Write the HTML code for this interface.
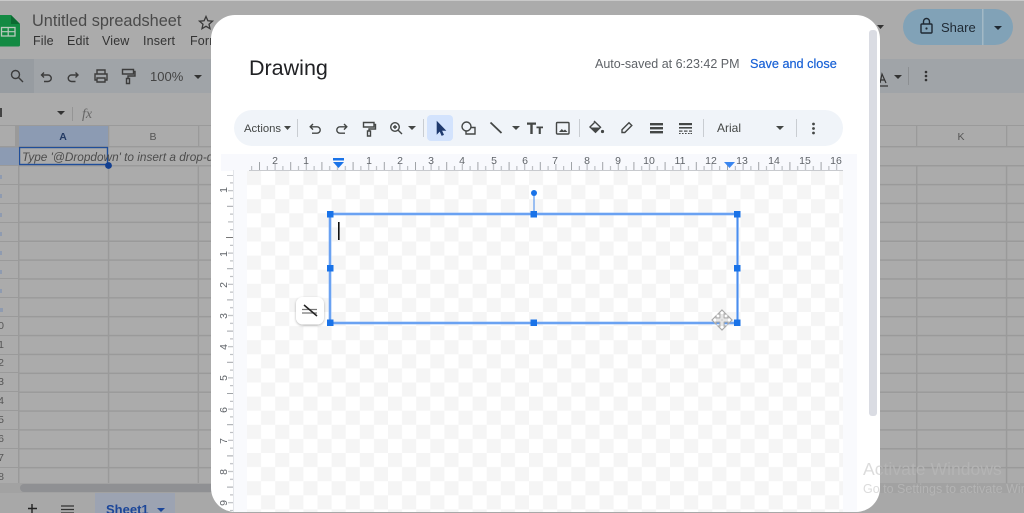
<!DOCTYPE html>
<html><head><meta charset="utf-8"><style>
html,body{margin:0;padding:0}
body{width:1024px;height:513px;overflow:hidden;position:relative;background:#ababab;font-family:"Liberation Sans",sans-serif}
svg{position:absolute;left:0;top:0;filter:blur(.35px)}
</style></head><body>
<svg width="1024" height="513" viewBox="0 0 1024 513" font-family="Liberation Sans, sans-serif">
<defs>
<pattern id="grid" x="18" y="165" width="89.8" height="18.87" patternUnits="userSpaceOnUse">
<rect x="0" y="0" width="1.5" height="19" fill="#9a9a9a"/><rect x="0" y="0" width="90" height="1.5" fill="#9a9a9a"/>
</pattern>
<pattern id="chk" x="247" y="171" width="28.2" height="28.2" patternUnits="userSpaceOnUse">
<rect x="0" y="0" width="14.1" height="14.1" fill="#f5f5f5"/><rect x="14.1" y="14.1" width="14.1" height="14.1" fill="#f5f5f5"/>
</pattern>
<pattern id="ht" x="259" y="155" width="31.2" height="16" patternUnits="userSpaceOnUse">
<rect x="0" y="7" width="1" height="8" fill="#a0a3a8"/><rect x="7.8" y="11" width="1" height="4" fill="#b0b3b8"/><rect x="15.6" y="9" width="1" height="6" fill="#b0b3b8"/><rect x="23.4" y="11" width="1" height="4" fill="#b0b3b8"/>
</pattern>
<pattern id="vt" x="224" y="174.6" width="9" height="31.2" patternUnits="userSpaceOnUse">
<rect x="3" y="0" width="6" height="1" fill="#a0a3a8"/><rect x="6" y="7.8" width="3" height="1" fill="#b0b3b8"/><rect x="4" y="15.6" width="5" height="1" fill="#b0b3b8"/><rect x="6" y="23.4" width="3" height="1" fill="#b0b3b8"/>
</pattern>
<clipPath id="onWhite"><path d="M840 440H880V488a24 24 0 0 1-24 24H840z"/></clipPath>
<clipPath id="onGray"><path d="M880 440H1024V513H840V512H856a24 24 0 0 0 24-24z"/></clipPath>
<filter id="sh" x="-30%" y="-30%" width="160%" height="160%"><feDropShadow dx="0" dy="1" stdDeviation="1.3" flood-color="#000" flood-opacity=".3"/></filter>
</defs>

<!-- sheets background -->
<rect width="1024" height="1" fill="#c9c9c9"/>
<rect x="0" y="59" width="1024" height="34" fill="#a0a4a8"/>
<rect x="0" y="59" width="34" height="34" fill="#979ca1"/>
<rect x="0" y="125" width="1024" height="358" fill="#ababab"/>
<rect x="18" y="125" width="90" height="21" fill="#8c9bb3"/>
<rect x="0" y="147" width="18" height="18" fill="#8c9bb3"/>
<rect x="18" y="165" width="1006" height="318" fill="url(#grid)"/>
<g fill="#9a9a9a"><rect x="0" y="125" width="1024" height="1"/><rect x="0" y="146" width="1024" height="1.4"/>
<rect x="18" y="125" width="1" height="22"/><rect x="108" y="125" width="1.3" height="22"/><rect x="198" y="125" width="1.3" height="22"/><rect x="916" y="125" width="1.3" height="22"/><rect x="1006" y="125" width="1.3" height="22"/><rect x="15" y="125" width="3" height="22"/>
<rect x="0" y="165" width="18" height="1"/><rect x="0" y="184" width="18" height="1"/><rect x="0" y="203" width="18" height="1"/><rect x="0" y="222" width="18" height="1"/><rect x="0" y="241" width="18" height="1"/><rect x="0" y="260" width="18" height="1"/><rect x="0" y="278" width="18" height="1"/><rect x="0" y="297" width="18" height="1"/><rect x="0" y="316" width="18" height="1"/><rect x="0" y="335" width="18" height="1"/><rect x="0" y="354" width="18" height="1"/><rect x="0" y="372" width="18" height="1"/><rect x="0" y="391" width="18" height="1"/><rect x="0" y="410" width="18" height="1"/><rect x="0" y="429" width="18" height="1"/><rect x="0" y="448" width="18" height="1"/><rect x="0" y="467" width="18" height="1"/>
</g>
<rect x="19.5" y="147.5" width="88" height="17" fill="none" stroke="#1f4e9a" stroke-width="1.4"/>
<circle cx="108.5" cy="165.5" r="3.4" fill="#123f90"/>
<text x="22" y="161" font-size="11.8" font-style="italic" fill="#4c4c4c">Type '@Dropdown' to insert a drop-down</text>
<text x="63" y="140" font-size="10.5" font-weight="bold" fill="#233a63" text-anchor="middle">A</text>
<text x="153" y="140" font-size="10.5" fill="#555" text-anchor="middle">B</text>
<text x="961" y="140" font-size="10.5" fill="#555" text-anchor="middle">K</text>
<g font-size="10.5" fill="#555" text-anchor="end">
<text x="4" y="329">0</text><text x="4" y="348">1</text><text x="4" y="366">2</text><text x="4" y="385">3</text><text x="4" y="404">4</text><text x="4" y="423">5</text><text x="4" y="442">6</text><text x="4" y="461">7</text><text x="4" y="480">8</text>
</g>
<g fill="#8f9bb0"><rect x="0" y="175" width="2" height="4"/><rect x="0" y="194" width="2" height="4"/><rect x="0" y="213" width="2" height="4"/><rect x="0" y="232" width="2" height="4"/><rect x="0" y="251" width="2" height="4"/><rect x="0" y="270" width="2" height="4"/><rect x="0" y="289" width="2" height="4"/><rect x="0" y="308" width="3" height="4"/></g>

<!-- bottom bar -->
<rect x="0" y="483" width="1024" height="30" fill="#a8a8a8"/>
<rect x="0" y="483" width="1024" height="10" fill="#a2a2a2"/>
<rect x="20" y="484" width="200" height="8" rx="4" fill="#8f9093"/>
<rect x="95" y="493" width="80" height="20" fill="#9ca3b2"/>
<text x="106" y="514" font-size="13" font-weight="bold" fill="#1c4699">Sheet1</text>
<path d="M157 508h8l-4 4z" fill="#1c4699"/>
<path d="M32 504v9M28 508.5h9" stroke="#222" stroke-width="1.4"/>
<path d="M61 506h13M61 509.5h13M61 513h13" stroke="#333" stroke-width="1.3"/>

<!-- sheets header -->
<path d="M-4 15h15l9 9v21a1.5 1.5 0 0 1-1.5 1.5H-4z" fill="#138a43"/>
<path d="M11 15l9 9h-9z" fill="#0c6b32"/>
<rect x="1.5" y="27.5" width="13.5" height="8.5" fill="none" stroke="#b9c9bd" stroke-width="1.3"/><path d="M8.2 27.5v8.5M1.5 31.7h13.5" stroke="#b9c9bd" stroke-width="1.2"/>
<text x="32" y="26" font-size="16.3" fill="#4a4a4a">Untitled spreadsheet</text>
<path d="M206 16.5l1.9 4.3 4.6.4-3.500 3 1 4.500-4-2.400-4 2.400 1-4.500-3.500-3 4.600-.4z" fill="none" stroke="#3a3a3a" stroke-width="1.3"/>
<g font-size="12.5" fill="#333" letter-spacing=".15"><text x="33" y="45">File</text><text x="67" y="45">Edit</text><text x="102" y="45">View</text><text x="143" y="45">Insert</text><text x="190" y="45">Format</text></g>
<g fill="none" stroke="#3c3c3c" stroke-width="1.4">
<circle cx="15.5" cy="74.5" r="4"/><path d="M18.5 77.5l4.500 4.500"/>
<path d="M44 72.500l-2.500 2.500 2.500 2.500M41.500 75h6.500a3 3 0 0 1 0 6.500h-4"/>
<path d="M75.500 72.500l2.500 2.500-2.500 2.500M78 75h-6.500a3 3 0 0 0 0 6.500h4"/>
<path d="M97 74v-4h8v4M97 80h-2v-6h12v6h-2M97 78h8v4h-8z"/>
<path d="M122.500 69.500h11v4.500h-11zM133.500 71.500h1.500v4.500h-7v2"/><path d="M126.500 78.500h3v5h-3z"/>
</g>
<text x="150" y="81" font-size="13" fill="#444">100%</text>
<path d="M194 75h8l-4 4z" fill="#333"/>
<path d="M877 25h7l-3.500 4z" fill="#333"/>
<path d="M880 83l2-9 4 9m-5-3h4M880 86h8" fill="none" stroke="#333" stroke-width="1.2"/>
<path d="M894 75h8l-4 4z" fill="#333"/><rect x="908" y="67" width="1" height="18" fill="#8c8f92"/>
<g fill="#333"><circle cx="926" cy="72" r="1.3"/><circle cx="926" cy="76" r="1.3"/><circle cx="926" cy="80" r="1.3"/></g>
<path d="M57 111h8l-4 4z" fill="#333"/><rect x="72" y="107" width="1" height="14" fill="#959595"/>
<text x="82" y="118" font-size="14" font-style="italic" font-family="Liberation Serif, serif" fill="#666">fx</text>
<rect x="0" y="108" width="2" height="9" fill="#444"/>

<!-- Share -->
<rect x="903" y="9" width="110" height="36" rx="18" fill="#81a2b7"/>
<rect x="982" y="9" width="1.5" height="36" fill="#a3b9c6"/>
<rect x="921" y="24" width="11" height="9" rx="1" fill="none" stroke="#1f2933" stroke-width="1.4"/>
<path d="M923.500 24v-2.500a3 3 0 0 1 6 0V24" fill="none" stroke="#1f2933" stroke-width="1.4"/><circle cx="926.5" cy="28.5" r="1.1" fill="#1f2933"/>
<text x="941" y="32" font-size="13" fill="#1f2933">Share</text>
<path d="M994 26h8l-4 4z" fill="#1f2933"/>

<!-- dialog -->
<path d="M235 15H856a24 24 0 0 1 24 24V488a24 24 0 0 1-24 24H235a24 24 0 0 1-24-24V39a24 24 0 0 1 24-24z" fill="#fff"/>
<rect x="869" y="30" width="8" height="386" rx="3" fill="#dadce3"/>
<text x="249" y="75" font-size="21.5" fill="#202124">Drawing</text>
<text x="595" y="68" font-size="12.5" fill="#5f6368">Auto-saved at 6:23:42 PM</text>
<text x="750" y="68" font-size="12.7" fill="#1a62d6" stroke="#1a62d6" stroke-width=".2">Save and close</text>

<!-- toolbar -->
<rect x="234" y="110" width="609" height="36" rx="18" fill="#f0f4f9"/>
<rect x="427" y="115" width="26" height="26" rx="4" fill="#d3e3fd"/>
<g fill="#c9cdd2"><rect x="297" y="119" width="1" height="18"/><rect x="423" y="119" width="1" height="18"/><rect x="579" y="119" width="1" height="18"/><rect x="703" y="119" width="1" height="18"/><rect x="796" y="119" width="1" height="18"/></g>
<text x="244" y="132" font-size="11.3" fill="#444746">Actions</text>
<g fill="#444746"><path d="M284 126h7l-3.500 4z"/><path d="M408 126h8l-4 4z"/><path d="M512 126h8l-4 4z"/><path d="M776 126h8l-4 4z"/></g>
<g fill="none" stroke="#444746" stroke-width="1.4">
<path d="M313 124l-2.800 2.800 2.800 2.800M310.500 126.800h6.500a3.200 3.200 0 0 1 0 6.400h-5"/>
<path d="M344 124l2.800 2.800-2.800 2.800M346.500 126.800h-6.500a3.200 3.200 0 0 0 0 6.400h5"/>
<path d="M363.500 122.500h10.500v4.500h-10.500zM374 124.500h1.500v4.500h-6.500v2"/><path d="M367.500 131h3v5h-3z"/>
<circle cx="395" cy="127" r="4.300"/><path d="M398.200 130.200l3.800 3.800M393 127h4M395 125v4"/>
<circle cx="466.500" cy="126.500" r="4.500"/><path d="M471 127.500h4v6.500h-9v-3"/>
<path d="M490.500 122.500l11 10.500" stroke-width="1.800"/>
<rect x="556.500" y="122.500" width="12.500" height="11.500" rx="1"/>
<path d="M622 132.500v-2.800l7-7 2.800 2.800-7 7z"/>
</g>
<path d="M559 132l2.800-3 1.800 1.800 1.400-1.300 2.500 2.500z" fill="#444746"/>
<path d="M437 121.500v12.500l2.800-3 2 4.500 1.800-.8-2-4.300h4z" fill="#1f3a6e" stroke="#1f3a6e" stroke-width=".6"/>
<path d="M527 122.500h9v2.200h-3.300v9.300h-2.400v-9.300H527zM536.500 126.500h6.500v1.800h-2.200v5.700h-2.100v-5.700h-2.200z" fill="#444746"/>
<!-- fill bucket -->
<path d="M594 121l6.500 6.300-5 5-5.500-5.300 4.500-4.500" fill="none" stroke="#444746" stroke-width="1.4"/>
<path d="M590.500 127.500h9.500l-4.500 4.500z" fill="#444746"/>
<circle cx="602.5" cy="131.5" r="1.6" fill="#444746"/>
<!-- line weight -->
<g fill="#444746"><rect x="650" y="123" width="13" height="2.4"/><rect x="650" y="127" width="13" height="2.4"/><rect x="650" y="131" width="13" height="2.4"/></g>
<!-- dash -->
<g fill="#444746"><rect x="679" y="123" width="13" height="2.2"/><rect x="679" y="127" width="13" height="1.6"/><rect x="679" y="130.5" width="3.5" height="1.2"/><rect x="684" y="130.5" width="3.5" height="1.2"/><rect x="689" y="130.5" width="3" height="1.2"/><rect x="679" y="133" width="1.6" height="1"/><rect x="682" y="133" width="1.6" height="1"/><rect x="685" y="133" width="1.6" height="1"/><rect x="688" y="133" width="1.6" height="1"/><rect x="690.5" y="133" width="1.5" height="1"/></g>
<text x="717" y="132" font-size="12" fill="#444746">Arial</text>
<g fill="#444746"><circle cx="813.5" cy="124" r="1.4"/><circle cx="813.5" cy="128.5" r="1.4"/><circle cx="813.5" cy="133" r="1.4"/></g>

<!-- canvas -->
<rect x="221" y="154" width="636" height="17" fill="#f8f9fd"/>
<rect x="233" y="170" width="624" height="342" fill="#f9fafd"/>
<path d="M247 171H843V512H247z" fill="#fff"/>
<path d="M247 171H843V512H247z" fill="url(#chk)"/>
<rect x="249" y="170" width="594" height="1" fill="#c8cace"/>
<rect x="249" y="155" width="594" height="15" fill="url(#ht)"/>
<rect x="224" y="175" width="9" height="336" fill="url(#vt)"/>
<rect x="233" y="170" width="1" height="342" fill="#e4e6ea"/>
<rect x="226" y="237" width="7" height="1" fill="#777"/>
<g font-size="10.5" fill="#5f6368" text-anchor="middle">
<text x="275" y="164">2</text><text x="306" y="164">1</text><text x="369" y="164">1</text><text x="400" y="164">2</text><text x="431" y="164">3</text><text x="462" y="164">4</text><text x="494" y="164">5</text><text x="525" y="164">6</text><text x="555" y="164">7</text><text x="587" y="164">8</text><text x="618" y="164">9</text><text x="649" y="164">10</text><text x="680" y="164">11</text><text x="711" y="164">12</text><text x="742" y="164">13</text><text x="774" y="164">14</text><text x="805" y="164">15</text><text x="836" y="164">16</text>
<text transform="translate(227,190) rotate(-90)">1</text><text transform="translate(227,254) rotate(-90)">1</text><text transform="translate(227,285) rotate(-90)">2</text><text transform="translate(227,316) rotate(-90)">3</text><text transform="translate(227,347) rotate(-90)">4</text><text transform="translate(227,378) rotate(-90)">5</text><text transform="translate(227,410) rotate(-90)">6</text><text transform="translate(227,441) rotate(-90)">7</text><text transform="translate(227,472) rotate(-90)">8</text><text transform="translate(227,503) rotate(-90)">9</text>
</g>
<g fill="#1a73e8"><rect x="333" y="158" width="11" height="2.5"/><path d="M333 162h11l-5.500 6z"/><path d="M724 162h11l-5.500 6z" fill="#3a86f0"/></g>

<!-- selection -->
<rect x="330" y="214" width="407.5" height="109" fill="none" stroke="#a6c8f8" stroke-width="3"/>
<rect x="330" y="214" width="407.5" height="109" fill="none" stroke="#4a8dee" stroke-width="1.3"/>
<path d="M534 193v21" stroke="#5d99ee" stroke-width="1.2"/>
<circle cx="534" cy="193" r="3" fill="#1a73e8"/>
<g fill="#1a73e8"><rect x="327" y="211" width="6.5" height="6.5"/><rect x="530.5" y="211" width="6.5" height="6.5"/><rect x="734" y="211" width="6.5" height="6.5"/><rect x="327" y="265" width="6.5" height="6.5"/><rect x="734" y="265" width="6.5" height="6.5"/><rect x="327" y="319.5" width="6.5" height="6.5"/><rect x="530.5" y="319.5" width="6.5" height="6.5"/><rect x="734" y="319.5" width="6.5" height="6.5"/></g>
<rect x="338" y="222" width="1.6" height="18" fill="#111"/>

<!-- float button -->
<rect x="296" y="297" width="28" height="27.5" rx="7" fill="#fff" filter="url(#sh)"/>
<path d="M302 309.500h15M302 313h15" stroke="#777" stroke-width="1.3"/>
<path d="M304 305l13 11" stroke="#222" stroke-width="1.5"/>

<!-- move cursor -->
<path d="M722 310l4 4h-2v4h4v-2l4 4-4 4v-2h-4v4h2l-4 4-4-4h2v-4h-4v2l-4-4 4-4v2h4v-4h-2z" fill="#fff" stroke="#aaa" stroke-width="1.2"/>
<path d="M722 314v12M716 320h12" stroke="#ccc" stroke-width="1"/>

<!-- windows watermark -->
<g clip-path="url(#onWhite)" fill="#dcdcdc"><text x="863" y="475" font-size="17.6">Activate Windows</text><text x="863" y="493" font-size="12.5">Go to Settings to activate Windows.</text></g>
<g clip-path="url(#onGray)" fill="#b4b4b4"><text x="863" y="475" font-size="17.6">Activate Windows</text><text x="863" y="493" font-size="12.5">Go to Settings to activate Windows.</text></g>
</svg>
</body></html>
